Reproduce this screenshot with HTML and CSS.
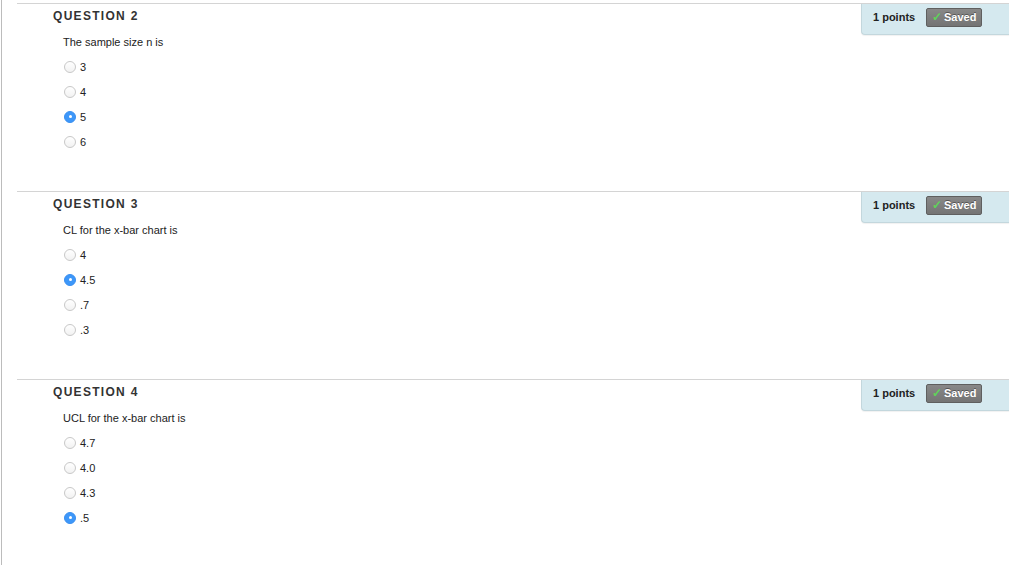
FILE: index.html
```html
<!DOCTYPE html>
<html lang="en">
<head>
    <meta charset="UTF-8">
    <meta name="viewport" content="width=device-width, initial-scale=1.0">
    <title>Test</title>
    <link rel="stylesheet" href="styles.css">
</head>
<body>
    <div class="page">
        <div class="question">
            <div class="question-head">
                <h3>QUESTION 2</h3>
                <div class="points">
                    <span class="points-label">1 points</span>
                    <span class="saved"><span class="check">&#10003;</span> Saved</span>
                </div>
            </div>
            <p class="question-text">The sample size n is</p>
            <ul class="answers">
                <li><span class="radio"></span>3</li>
                <li><span class="radio"></span>4</li>
                <li><span class="radio checked"></span>5</li>
                <li><span class="radio"></span>6</li>
            </ul>
        </div>

        <div class="question">
            <div class="question-head">
                <h3>QUESTION 3</h3>
                <div class="points">
                    <span class="points-label">1 points</span>
                    <span class="saved"><span class="check">&#10003;</span> Saved</span>
                </div>
            </div>
            <p class="question-text">CL for the x-bar chart is</p>
            <ul class="answers">
                <li><span class="radio"></span>4</li>
                <li><span class="radio checked"></span>4.5</li>
                <li><span class="radio"></span>.7</li>
                <li><span class="radio"></span>.3</li>
            </ul>
        </div>

        <div class="question">
            <div class="question-head">
                <h3>QUESTION 4</h3>
                <div class="points">
                    <span class="points-label">1 points</span>
                    <span class="saved"><span class="check">&#10003;</span> Saved</span>
                </div>
            </div>
            <p class="question-text">UCL for the x-bar chart is</p>
            <ul class="answers">
                <li><span class="radio"></span>4.7</li>
                <li><span class="radio"></span>4.0</li>
                <li><span class="radio"></span>4.3</li>
                <li><span class="radio checked"></span>.5</li>
            </ul>
        </div>
    </div>
</body>
</html>
```

FILE: styles.css
```css
html, body {
    height: 100%;
}

body {
    margin: 0;
    background-color: #fff;
    font-family: 'Liberation Sans', Arial, sans-serif;
    color: #333;
    overflow: hidden;
}

.page {
    margin-left: 1px;
    min-height: 100%;
    padding-top: 3px;
    padding-right: 15px;
    border-left: 1px solid #bcbcbc;
    box-sizing: border-box;
}

.question {
    margin-left: 15px;
    border-top: 1px solid #d4d4d4;
    padding-bottom: 37px;
}

.question-head {
    display: flex;
    justify-content: space-between;
    align-items: flex-start;
}

.question-head h3 {
    margin: 0;
    padding: 5px 0 0 36px;
    font-size: 12px;
    line-height: 14px;
    letter-spacing: 1.3px;
    font-weight: bold;
    color: #333;
}

.points {
    display: flex;
    align-items: center;
    width: 148px;
    height: 31px;
    box-sizing: border-box;
    padding: 0 0 4px 11px;
    background-color: #d5e9ef;
    border-left: 1px solid #c3d7dd;
    border-bottom: 1px solid #c3d7dd;
    border-bottom-left-radius: 4px;
    box-shadow: 0 1px 1px rgba(0, 0, 0, 0.06);
}

.points-label {
    font-size: 11px;
    font-weight: bold;
    color: #222;
    margin-right: 11px;
}

.saved {
    display: inline-flex;
    align-items: center;
    justify-content: center;
    width: 56px;
    height: 19px;
    box-sizing: border-box;
    background: linear-gradient(#888, #747474);
    border: 1px solid #5f5f5f;
    border-radius: 2px;
    color: #fff;
    font-size: 11px;
    font-weight: bold;
    text-shadow: 0 -1px 0 #555;
}

.check {
    color: #5fd35a;
    font-size: 12px;
    margin-right: 2px;
    text-shadow: none;
}

.question-text {
    margin: 0;
    padding-left: 46px;
    font-size: 11px;
    line-height: 14px;
    color: #222;
}

.answers {
    list-style: none;
    margin: 5px 0 0;
    padding: 0 0 0 47px;
}

.answers li {
    display: flex;
    align-items: center;
    height: 25px;
    font-size: 11px;
    color: #222;
}

.radio {
    width: 12px;
    height: 12px;
    box-sizing: border-box;
    border-radius: 50%;
    border: 1px solid #c8c8c8;
    background: linear-gradient(#fff, #f2f2f2);
    margin-right: 4px;
    position: relative;
}

.radio.checked {
    border-color: #3a8ff0;
    background: #3d97f9;
}

.radio.checked::after {
    content: "";
    position: absolute;
    left: 3.5px;
    top: 3.5px;
    width: 3px;
    height: 3px;
    border-radius: 50%;
    background: #fff;
}
```
